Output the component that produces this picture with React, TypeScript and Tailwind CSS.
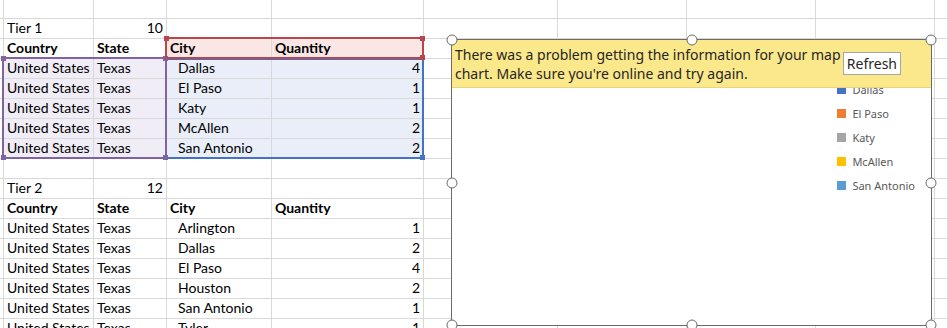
type Cell = { t?: string; right?: boolean; bold?: boolean; indent?: boolean; bg?: string };

const cellFont = { fontFamily: 'Lato, "Liberation Sans", sans-serif' };
const uiFont = { fontFamily: '"Noto Sans", "Open Sans", sans-serif' };

const blank = (n: number): Cell[] => Array.from({ length: n }, () => ({}));

function dataRow(city: string, qty: string, hl: boolean): Cell[] {
  return [
    {},
    { t: 'United States', bg: hl ? 'bg-[#f1edf7]' : '' },
    { t: 'Texas', bg: hl ? 'bg-[#f1edf7]' : '' },
    { t: city, indent: true, bg: hl ? 'bg-[#e9eef8]' : '' },
    { t: qty, right: true, bg: hl ? 'bg-[#e9eef8]' : '' },
    ...blank(5),
  ];
}

function headerRow(hl: boolean): Cell[] {
  return [
    {},
    { t: 'Country', bold: true },
    { t: 'State', bold: true },
    { t: 'City', bold: true, bg: hl ? 'bg-[#fbe6e6]' : '' },
    { t: 'Quantity', bold: true, bg: hl ? 'bg-[#fbe6e6]' : '' },
    ...blank(5),
  ];
}

function tierRow(label: string, n: string): Cell[] {
  return [{}, { t: label }, { t: n, right: true }, ...blank(7)];
}

const rows: Cell[][] = [
  blank(10),
  tierRow('Tier 1', '10'),
  headerRow(true),
  dataRow('Dallas', '4', true),
  dataRow('El Paso', '1', true),
  dataRow('Katy', '1', true),
  dataRow('McAllen', '2', true),
  dataRow('San Antonio', '2', true),
  blank(10),
  tierRow('Tier 2', '12'),
  headerRow(false),
  dataRow('Arlington', '1', false),
  dataRow('Dallas', '2', false),
  dataRow('El Paso', '4', false),
  dataRow('Houston', '2', false),
  dataRow('San Antonio', '1', false),
  dataRow('Tyler', '1', false),
];

const legend = [
  { name: 'Dallas', color: 'bg-[#4472c4]' },
  { name: 'El Paso', color: 'bg-[#ed7d31]' },
  { name: 'Katy', color: 'bg-[#a5a5a5]' },
  { name: 'McAllen', color: 'bg-[#ffc000]' },
  { name: 'San Antonio', color: 'bg-[#5b9bd5]' },
];

function Handle({ className }: { className: string }) {
  return (
    <div
      className={`absolute w-[11px] h-[11px] rounded-full bg-white border-[1.5px] border-[#6a6a6a] -translate-x-1/2 -translate-y-1/2 ${className}`}
    />
  );
}

// small square on a corner of a range highlight
function Corner({ className }: { className: string }) {
  return <div className={`absolute w-[5px] h-[5px] ${className}`} />;
}

export default function App() {
  return (
    <div className="relative w-[948px] h-[328px] overflow-hidden bg-white text-black" style={cellFont}>
      <div className="grid grid-cols-[4px_90px_73px_105px_152px_134px_129px_129px_119px_1fr]">
        {rows.map((row, ri) =>
          row.map((c, ci) => (
            <div
              key={`${ri}-${ci}`}
              className={`border-r border-b border-[#d9d9d9] ${ri === 0 ? 'h-[19px]' : 'h-[20px]'} flex items-end pb-[1px] text-[14px] leading-[18px] whitespace-nowrap overflow-hidden ${
                c.right ? 'justify-end pr-[3px]' : c.indent ? 'pl-[11px]' : 'pl-[3px]'
              } ${c.bold ? 'font-bold' : ''} ${c.bg ?? ''}`}
            >
              {c.t}
            </div>
          ))
        )}
      </div>

      {/* formula range highlights */}
      <div className="absolute left-[165px] top-[58px] w-[259px] h-[101px] border-2 border-[#4472c4]">
        <Corner className="-right-[3px] -bottom-[3px] bg-[#4472c4]" />
      </div>
      <div className="absolute left-[2px] top-[57px] w-[165px] h-[102px] border-2 border-[#8064a2]">
        <Corner className="-left-[3px] -top-[3px] bg-[#8064a2]" />
        <Corner className="-right-[3px] -top-[3px] bg-[#8064a2]" />
        <Corner className="-left-[3px] -bottom-[3px] bg-[#8064a2]" />
        <Corner className="-right-[3px] -bottom-[3px] bg-[#8064a2]" />
      </div>
      <div className="absolute left-[165px] top-[37px] w-[259px] h-[22px] border-2 border-[#b8464b]">
        <Corner className="-left-[3px] -top-[3px] bg-[#b8464b]" />
        <Corner className="-right-[3px] -top-[3px] bg-[#b8464b]" />
        <Corner className="-right-[3px] -bottom-[3px] bg-[#b8464b]" />
      </div>

      {/* map chart */}
      <div className="absolute left-[451px] top-[39px] w-[481px] h-[287px] bg-white border border-[#6a6a6a]">
        <div className="absolute right-[16px] top-[42px] flex flex-col gap-[9px] text-[11px] leading-[15px] text-[#595959]" style={uiFont}>
          {legend.map((l) => (
            <div key={l.name} className="flex items-center gap-[6px]">
              <span className={`w-[9px] h-[9px] ${l.color}`} />
              <span>{l.name}</span>
            </div>
          ))}
        </div>
        <div
          className="absolute left-0 right-0 top-0 h-[48px] bg-[#fbe88b] border-b border-[#e8d57a] flex items-start justify-between pl-[3px] pr-[30px] pt-[5px] text-[14px] leading-[19px] text-[#262626]"
          style={uiFont}
        >
          <p className="whitespace-nowrap shrink-0">
            There was a problem getting the information for your map
            <br />
            chart. Make sure you're online and try again.
          </p>
          <button className="mt-[7px] h-[23px] px-[3px] bg-white border border-[#a6a6a6] text-[14px] leading-[20px] text-[#262626]">
            Refresh
          </button>
        </div>
        <Handle className="left-0 top-0" />
        <Handle className="left-1/2 top-0" />
        <Handle className="left-full top-0" />
        <Handle className="left-0 top-1/2" />
        <Handle className="left-full top-1/2" />
        <Handle className="left-0 top-full" />
        <Handle className="left-1/2 top-full" />
        <Handle className="left-full top-full" />
      </div>
    </div>
  );
}
